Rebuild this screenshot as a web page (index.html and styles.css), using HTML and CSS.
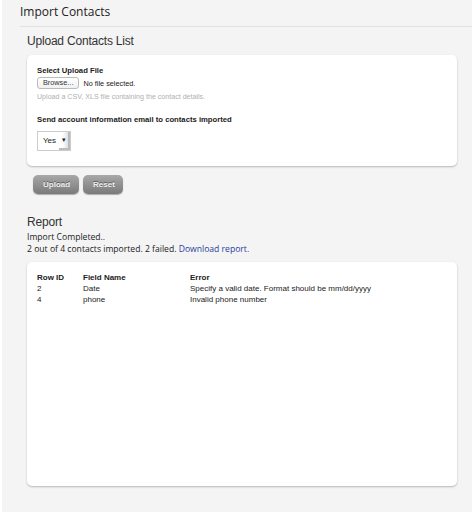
FILE: index.html
```html
<!DOCTYPE html>
<html lang="en">
<head>
    <meta charset="UTF-8">
    <title>Import Contacts</title>
    <link rel="stylesheet" href="styles.css">
</head>
<body>
    <div class="page">
        <h1 class="page-title">Import Contacts</h1>

        <div class="section">
            <h2>Upload Contacts List</h2>
            <div class="card upload-card">
                <div class="field">
                    <label>Select Upload File</label>
                    <div class="file-row">
                        <span class="browse-btn">Browse...</span>
                        <span class="file-name">No file selected.</span>
                    </div>
                    <p class="hint">Upload a CSV, XLS file containing the contact details.</p>
                </div>
                <div class="field">
                    <label>Send account information email to contacts imported</label>
                    <div class="select">
                        <span class="select-value">Yes</span>
                        <span class="select-arrow">&#9662;</span>
                    </div>
                </div>
            </div>

            <div class="actions">
                <button class="btn">Upload</button>
                <button class="btn">Reset</button>
            </div>
        </div>

        <div class="section report">
            <h2>Report</h2>
            <p class="status">Import Completed..</p>
            <p class="status">2 out of 4 contacts imported. 2 failed. <a href="#">Download report.</a></p>
            <div class="card report-card">
                <table class="errors">
                    <thead>
                        <tr><th class="col-id">Row ID</th><th class="col-field">Field Name</th><th>Error</th></tr>
                    </thead>
                    <tbody>
                        <tr><td>2</td><td>Date</td><td>Specify a valid date. Format should be mm/dd/yyyy</td></tr>
                        <tr><td>4</td><td>phone</td><td>Invalid phone number</td></tr>
                    </tbody>
                </table>
            </div>
        </div>
    </div>
</body>
</html>
```

FILE: styles.css
```css
/* Import contacts page */
body {
    margin: 0;
    background-color: #ffffff;
    font-family: 'Liberation Sans', Arial, sans-serif;
    color: #222;
}

.page {
    margin: 0 2px;
    height: 512px;
    background-color: #f4f4f4;
    padding: 0 0 0 18px;
    box-sizing: border-box;
    overflow: hidden;
}

.page-title {
    margin: 0;
    padding: 4px 0 0;
    height: 22px;
    font-family: 'Open Sans', sans-serif;
    font-weight: 400;
    font-size: 12px;
    line-height: 16px;
    color: #222;
    border-bottom: 1px solid #e2e2e2;
}

.section {
    padding: 0 15px 0 7px;
}

h2 {
    margin: 0;
    font-weight: 400;
    font-size: 12px;
    line-height: 16px;
    letter-spacing: -0.2px;
    color: #333;
}

.section h2 {
    padding: 6px 0 6px;
}

.card {
    background-color: #fff;
    border-radius: 5px;
    box-shadow: 0 1px 2px rgba(0, 0, 0, 0.25);
}

.upload-card {
    height: 111px;
    box-sizing: border-box;
    padding: 11px 10px;
}

.field label {
    display: block;
    font-weight: 700;
    font-size: 7.7px;
    line-height: 10px;
    color: #222;
}

.file-row {
    display: flex;
    align-items: center;
    gap: 4px;
    margin-top: 1px;
    font-size: 7.3px;
}

.browse-btn {
    display: inline-block;
    padding: 0 5px;
    height: 10px;
    line-height: 10px;
    border: 1px solid #bbb;
    border-radius: 3px;
    background: linear-gradient(#fff, #f0f0f0);
    color: #333;
}

.file-name {
    color: #222;
}

.hint {
    margin: 3px 0 0;
    font-size: 7.1px;
    line-height: 10px;
    color: #b0b0b0;
}

.field + .field {
    margin-top: 13px;
}

.select {
    display: flex;
    width: 34px;
    height: 20px;
    margin-top: 6px;
    border: 1px solid #ccc;
    box-sizing: border-box;
    font-size: 8px;
    background: #fff;
}

.select-value {
    flex: 1;
    line-height: 18px;
    padding-left: 5px;
}

.select-arrow {
    width: 9px;
    font-size: 7px;
    line-height: 16px;
    text-align: center;
    color: #222;
    background: linear-gradient(to right, #fff 40%, #e0e0e0);
    border-right: 2px solid #bbb;
    border-bottom: 2px solid #bbb;
}

.actions {
    display: flex;
    gap: 4px;
    margin: 9px 0 0 6px;
}

.btn {
    height: 19px;
    padding: 0 10px;
    border: none;
    border-radius: 5px;
    background: linear-gradient(#a8a8a8, #7a7a7a);
    color: #eee;
    font-family: 'Liberation Sans', Arial, sans-serif;
    font-weight: 700;
    font-size: 8px;
    text-shadow: 0 -1px 0 rgba(0, 0, 0, 0.4);
    box-shadow: 0 1px 1px rgba(0, 0, 0, 0.3);
}

.btn:first-child {
    width: 46px;
}

.btn:last-child {
    width: 40px;
}

.report h2 {
    padding: 20px 0 1px;
}

.status {
    margin: 0;
    font-family: 'Open Sans', sans-serif;
    font-size: 8.6px;
    line-height: 12px;
    color: #222;
}

.status a {
    color: #2b3b9c;
    text-decoration: none;
}

.report-card {
    margin-top: 7px;
    height: 224px;
    padding: 10px 10px;
    box-sizing: border-box;
}

.errors {
    border-collapse: collapse;
    font-size: 8px;
    color: #222;
}

.errors th {
    text-align: left;
    font-weight: 700;
    padding: 0;
    line-height: 11px;
}

.errors td {
    padding: 0;
    line-height: 11px;
}

.col-id {
    width: 46px;
}

.col-field {
    width: 107px;
}
```
